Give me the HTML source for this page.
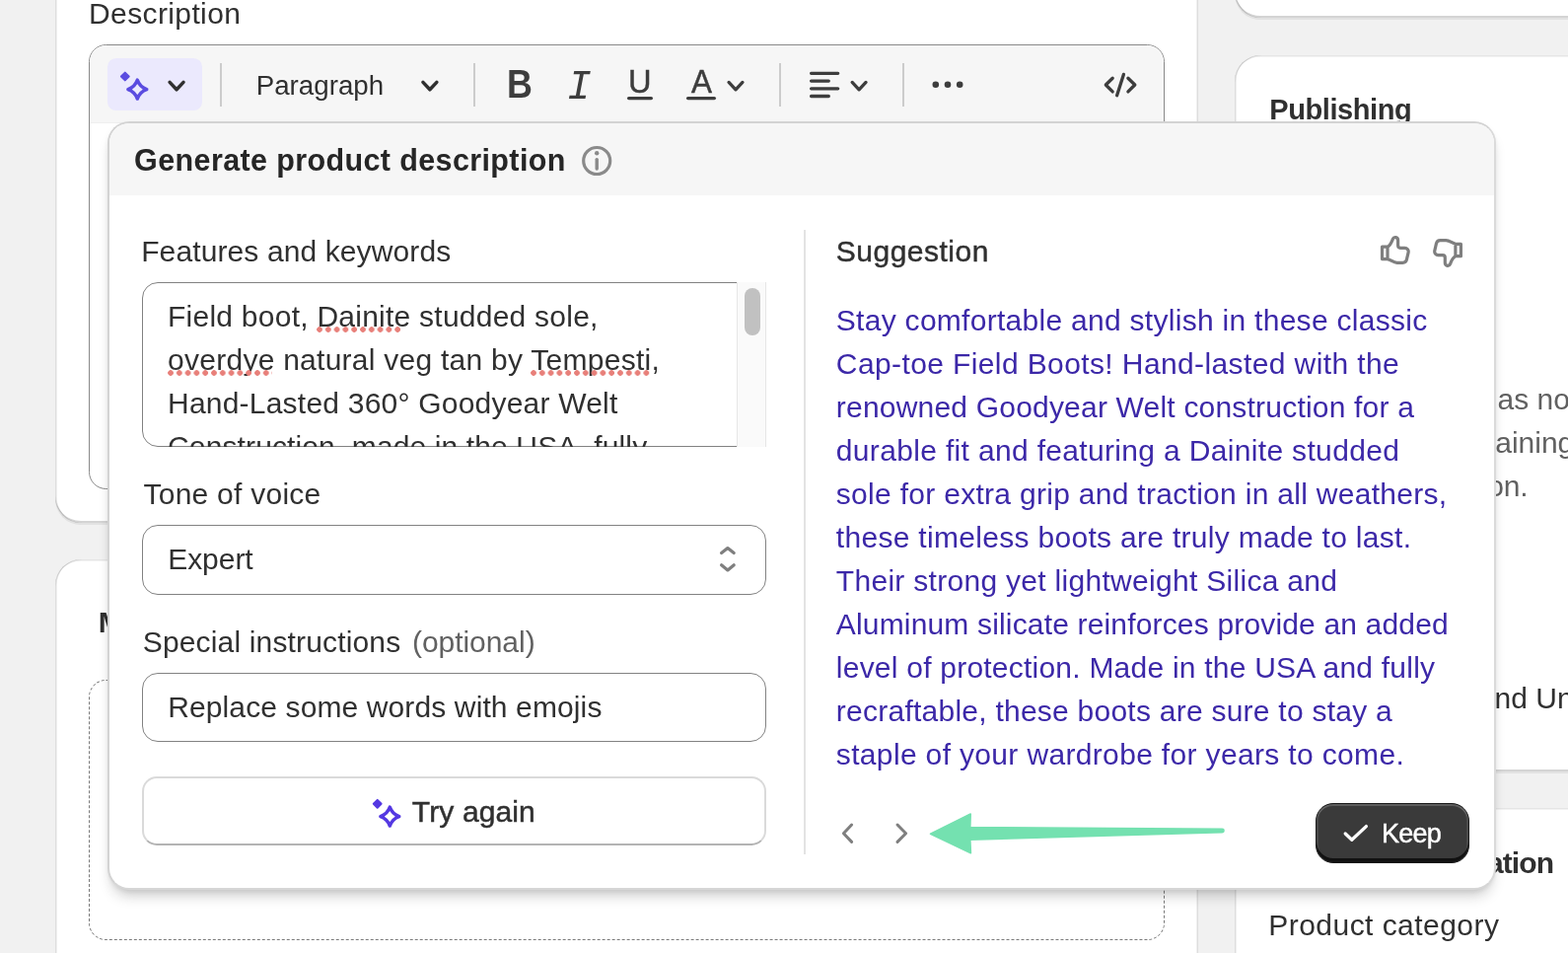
<!DOCTYPE html>
<html lang="en">
<head>
<meta charset="utf-8">
<title>Generate product description</title>
<style>
html,body{margin:0;padding:0}
body{width:1590px;height:966px;overflow:hidden;position:relative;background:#f1f1f1;will-change:transform;
  font-family:"Liberation Sans",sans-serif;font-size:30px;color:#303030}
.t{position:absolute;white-space:pre;line-height:44px}
.g{position:absolute;line-height:60px;transform-origin:0 0;color:#3d3d3d}
.pre{position:absolute;right:100%;top:0;margin-right:2px}
.card{position:absolute;background:#fff;border-radius:26px;
  box-shadow:inset 1.5px 0 0 rgba(0,0,0,.13),inset -1.5px 0 0 rgba(0,0,0,.13),inset 0 -2px 0 rgba(0,0,0,.17),inset 0 1.5px 0 rgba(204,204,204,.5),0 2px 0 rgba(26,26,26,.07)}
.layer{position:absolute;left:0;top:0;width:1590px;height:966px;pointer-events:none}
svg.layer{overflow:visible}
#editor{position:absolute;left:90px;top:45px;width:1089px;height:449px;border:1px solid #8a8a8a;border-radius:17.6px;background:#fff;overflow:hidden}
#toolbar{position:absolute;left:0;top:0;right:0;height:78px;background:#f6f6f6;border-bottom:1px solid #efefef}
#aibtn{position:absolute;left:109px;top:59px;width:96px;height:53px;border-radius:8.8px;background:#ebe9fd}
.vdiv{position:absolute;top:64px;width:2px;height:44px;background:#cccccc}
#dropzone{position:absolute;left:90px;top:689px;width:1089px;height:262px;border:1px dashed #7a7a7a;border-radius:17.6px}
#pop{position:absolute;left:109px;top:123px;width:1404px;height:775px;border:2px solid #d3d3d3;border-right-color:#dadada;border-bottom-color:#d6d6d6;border-radius:22px;background:#fff;
  box-shadow:0 10px 14px -5px rgba(26,26,26,.25),0 2px 5px rgba(26,26,26,.06)}
#popclip{position:absolute;left:0;top:0;right:0;bottom:0;border-radius:20px;overflow:hidden}
#pophead{position:absolute;left:0;top:0;right:0;height:73px;background:#f6f6f6}
#popin{position:absolute;left:-111px;top:-125px;width:1590px;height:966px}
.field{position:absolute;border:1px solid #828282;border-radius:16px;background:#fff;box-sizing:border-box}
#ta{position:absolute;left:144px;top:286px;width:633px;height:167px;overflow:hidden}
#tabox{position:absolute;left:0;top:0;width:640px;height:167px;box-sizing:border-box;border:1px solid #828282;border-radius:16px 0 0 16px}
#tain{position:absolute;left:-144px;top:-286px;width:1590px;height:966px}
#track{position:absolute;left:747px;top:286px;width:30px;height:167px;background:#fafafa;box-sizing:border-box;border-left:1px solid #e6e6e6;border-right:1px solid #e6e6e6}
#thumb{position:absolute;left:755px;top:292px;width:16px;height:48px;border-radius:8px;background:#c1c1c1}
.sp{position:absolute;height:6px;background-image:radial-gradient(circle at 3px 3px,#e8807a 2.5px,rgba(232,128,122,0) 3.1px);background-size:8.8px 6px;background-repeat:repeat-x}
#try{position:absolute;left:144px;top:787.4px;width:633px;height:70px;box-sizing:border-box;border-radius:15px;background:#fff;
  border:2px solid #dadada;border-bottom-color:#b4b4b4}
#keep{position:absolute;left:1334px;top:814px;width:156px;height:61px;box-sizing:border-box;border-radius:18px;background:#3a3a3a;
  border:1.5px solid #1a1a1a;box-shadow:inset 0 -4px 0 #111,inset 0 2px 0 rgba(255,255,255,.18),inset 2px 0 0 rgba(255,255,255,.08),inset -2px 0 0 rgba(255,255,255,.08)}
#coldiv{position:absolute;left:815px;top:233px;width:2px;height:633px;background:#e3e3e3}
</style>
</head>
<body>
<!-- page cards -->
<div class="card" style="left:56px;top:-60px;width:1159px;height:590px"></div>
<div class="card" style="left:56px;top:567px;width:1159px;height:460px"></div>
<div class="card" style="left:1252px;top:-60px;width:400px;height:78px"></div>
<div class="card" style="left:1252px;top:56px;width:400px;height:726px"></div>
<div class="card" style="left:1252px;top:819px;width:400px;height:220px"></div>

<div id="editor"><div id="toolbar"></div></div>
<div id="aibtn"></div>
<div class="vdiv" style="left:223px"></div>
<div class="vdiv" style="left:480px"></div>
<div class="vdiv" style="left:790px"></div>
<div class="vdiv" style="left:915px"></div>
<div id="dropzone"></div>
<div class="g" style="left:513.70px;top:55.60px;transform:scale(0.855,0.988);font-weight:700;font-size:42px">B</div>
<div class="g" style="left:575.20px;top:57.80px;transform:scale(0.981,1.022);font-family:'Liberation Mono',monospace;font-style:italic;font-size:42px">I</div>
<div class="g" style="left:637.24px;top:54.04px;transform:scale(0.933,0.961);font-size:35px;-webkit-text-stroke:0.45px #3d3d3d">U</div>
<div class="g" style="left:700.50px;top:55.04px;transform:scale(0.899,0.940);font-size:35px;-webkit-text-stroke:0.45px #3d3d3d">A</div>
<div class="t" style="left:90.06px;top:-8.40px;letter-spacing:0.380px;">Description</div>
<div class="t" style="left:259.70px;top:65.40px;font-size:27.7px;letter-spacing:0.025px;">Paragraph</div>
<div class="t" style="left:1287.34px;top:88.95px;font-size:29px;font-weight:700;letter-spacing:-0.422px;">Publishing</div>
<div class="t" style="left:1518.60px;top:382.61px;color:#616161;letter-spacing:0.000px;"><span class="pre">This product h</span>as no</div>
<div class="t" style="left:1516.22px;top:426.61px;color:#616161;letter-spacing:0.000px;"><span class="pre">inventory rem</span>aining</div>
<div class="t" style="left:1508.34px;top:470.61px;color:#616161;letter-spacing:-0.200px;"><span class="pre">at this locati</span>on.</div>
<div class="t" style="left:1515.58px;top:685.61px;letter-spacing:0.000px;"><span class="pre">International a</span>nd United States</div>
<div class="t" style="left:1508.10px;top:852.61px;font-weight:700;letter-spacing:-0.950px;"><span class="pre">Product organiz</span>ation</div>
<div class="t" style="left:1286.32px;top:915.61px;letter-spacing:0.453px;">Product category</div>
<div class="t" style="left:99.84px;top:608.61px;font-weight:700;letter-spacing:0.000px;">Media</div>
<svg class="layer" viewBox="0 0 1590 966" fill="none" stroke-linecap="round" stroke-linejoin="round">
<path d="M139.30 81.10C141.00 85.90 144.00 88.90 148.80 90.60C144.00 92.30 141.00 95.30 139.30 100.10C137.60 95.30 134.60 92.30 129.80 90.60C134.60 88.90 137.60 85.90 139.30 81.10Z" stroke="#5b4ce0" stroke-width="3.4"/><path d="M126.80 73.60L130.70 77.50L126.80 81.40L122.90 77.50Z" fill="#5b4ce0" stroke="#5b4ce0" stroke-width="2"/>
<path d="M172.10 83.4L179.05 90.8L186.00 83.4" stroke="#303030" stroke-width="3.5"/>
<path d="M428.95 83.4L435.90 90.8L442.85 83.4" stroke="#303030" stroke-width="3.5"/>
<path d="M637.6 99.6H660.4" stroke="#3d3d3d" stroke-width="3.3"/>
<path d="M697.6 99.6H724.4" stroke="#3d3d3d" stroke-width="3.3"/>
<path d="M739.05 83.4L746.00 90.8L752.95 83.4" stroke="#3d3d3d" stroke-width="3.3"/>
<path d="M822.6 74.3H849.7M822.6 82.1H840.3M822.6 89.8H849.7M822.6 97.5H840.3" stroke="#3d3d3d" stroke-width="3.3"/>
<path d="M864.15 83.4L871.10 90.8L878.05 83.4" stroke="#3d3d3d" stroke-width="3.3"/>
<circle cx="948.8" cy="85.8" r="3.3" fill="#3d3d3d"/>
<circle cx="961.0" cy="85.8" r="3.3" fill="#3d3d3d"/>
<circle cx="973.2" cy="85.8" r="3.3" fill="#3d3d3d"/>
<path d="M1128.2 79.2L1121.3 86L1128.2 92.9M1139.4 75.4L1132.6 96.8M1143.9 79.2L1150.8 86L1143.9 92.9" stroke="#3d3d3d" stroke-width="3.3"/>
</svg>

<!-- popover -->
<div id="pop"><div id="popclip"><div id="pophead"></div><div id="popin">
  <div id="coldiv"></div>
  <div id="ta"><div id="tabox"></div><div id="tain">
<div class="t" style="left:170.06px;top:298.61px;letter-spacing:0.244px;">Field boot, Dainite studded sole,</div>
<div class="t" style="left:170.06px;top:342.61px;letter-spacing:0.257px;">overdye natural veg tan by Tempesti,</div>
<div class="t" style="left:170.06px;top:386.61px;letter-spacing:0.214px;">Hand-Lasted 360° Goodyear Welt</div>
<div class="t" style="left:170.06px;top:430.61px;letter-spacing:0.120px;">Construction, made in the USA, fully</div>
    <div class="sp" style="left:321px;top:331.2px;width:88px"></div>
    <div class="sp" style="left:170px;top:375.2px;width:106px"></div>
    <div class="sp" style="left:538px;top:375.2px;width:123px"></div>
  </div></div>
  <div id="track"></div><div id="thumb"></div>
  <div class="field" style="left:144px;top:532px;width:633px;height:71px"></div>
  <div class="field" style="left:144px;top:682px;width:633px;height:70px"></div>
  <div id="try"></div>
  <div id="keep"></div>
<div class="t" style="left:136.10px;top:140.43px;font-size:30.5px;font-weight:700;color:#262626;letter-spacing:0.378px;">Generate product description</div>
<div class="t" style="left:143.18px;top:232.60px;letter-spacing:0.110px;">Features and keywords</div>
<div class="t" style="left:145.48px;top:478.61px;letter-spacing:0.250px;">Tone of voice</div>
<div class="t" style="left:170.18px;top:544.61px;letter-spacing:-0.040px;">Expert</div>
<div class="t" style="left:144.72px;top:628.61px;letter-spacing:0.158px;">Special instructions</div>
<div class="t" style="left:417.96px;top:628.61px;color:#616161;letter-spacing:-0.044px;">(optional)</div>
<div class="t" style="left:170.18px;top:694.61px;letter-spacing:0.117px;">Replace some words with emojis</div>
<div class="t" style="left:417.86px;top:800.61px;letter-spacing:0.125px;-webkit-text-stroke:0.5px #303030;">Try again</div>
<div class="t" style="left:847.84px;top:232.60px;letter-spacing:0.489px;-webkit-text-stroke:0.45px #303030;">Suggestion</div>
<div class="t" style="left:1400.96px;top:822.64px;font-size:27px;color:#fff;letter-spacing:-0.733px;-webkit-text-stroke:0.45px #fff;">Keep</div>
<div class="t" style="left:847.84px;top:302.61px;color:#3c28a8;letter-spacing:0.282px;">Stay comfortable and stylish in these classic</div>
<div class="t" style="left:847.84px;top:346.61px;color:#3c28a8;letter-spacing:0.390px;">Cap-toe Field Boots! Hand-lasted with the</div>
<div class="t" style="left:847.84px;top:390.61px;color:#3c28a8;letter-spacing:0.200px;">renowned Goodyear Welt construction for a</div>
<div class="t" style="left:847.84px;top:434.61px;color:#3c28a8;letter-spacing:0.333px;">durable fit and featuring a Dainite studded</div>
<div class="t" style="left:847.84px;top:478.61px;color:#3c28a8;letter-spacing:0.292px;">sole for extra grip and traction in all weathers,</div>
<div class="t" style="left:847.84px;top:522.61px;color:#3c28a8;letter-spacing:0.302px;">these timeless boots are truly made to last.</div>
<div class="t" style="left:847.84px;top:566.61px;color:#3c28a8;letter-spacing:0.295px;">Their strong yet lightweight Silica and</div>
<div class="t" style="left:847.84px;top:610.61px;color:#3c28a8;letter-spacing:0.164px;">Aluminum silicate reinforces provide an added</div>
<div class="t" style="left:847.84px;top:654.61px;color:#3c28a8;letter-spacing:0.227px;">level of protection. Made in the USA and fully</div>
<div class="t" style="left:847.84px;top:698.61px;color:#3c28a8;letter-spacing:0.243px;">recraftable, these boots are sure to stay a</div>
<div class="t" style="left:847.84px;top:742.61px;color:#3c28a8;letter-spacing:0.341px;">staple of your wardrobe for years to come.</div>
  <svg class="layer" viewBox="0 0 1590 966" fill="none" stroke-linecap="round" stroke-linejoin="round">
<circle cx="605.2" cy="163" r="13.5" stroke="#8a8a8a" stroke-width="3.2"/><circle cx="605.2" cy="155.2" r="2.2" fill="#8a8a8a"/><path d="M605.2 161.6V171" stroke="#8a8a8a" stroke-width="3.4"/>
<path d="M731.6 560.6L737.9 555.6L744.2 560.6M731.6 572.8L737.9 577.9L744.2 572.8" stroke="#7f7f7f" stroke-width="3.2"/>
<path d="M395.30 818.10C397.00 822.90 400.00 825.90 404.80 827.60C400.00 829.30 397.00 832.30 395.30 837.10C393.60 832.30 390.60 829.30 385.80 827.60C390.60 825.90 393.60 822.90 395.30 818.10Z" stroke="#5438e2" stroke-width="3.4"/><path d="M382.70 810.90L386.60 814.80L382.70 818.70L378.80 814.80Z" fill="#5438e2" stroke="#5438e2" stroke-width="2"/>
<path d="M1401.5 250.2H1407V262.6H1401.5ZM1407 250.2C1410 248.6 1411.3 245 1412.4 242.2C1413.4 239.6 1417.6 240 1417.6 243.6V248.8C1417.6 250.4 1418.6 251.3 1420 251.3H1424.4C1427 251.3 1428.6 253.4 1428.1 255.8L1426.4 263.2C1425.9 265.2 1424.4 266.3 1422.4 266.3H1416.6C1413 266.3 1410.6 263.4 1407 262.6" stroke="#7f7f7f" stroke-width="3.2"/>
<g transform="translate(2882.9 509.9) rotate(180)"><path d="M1401.5 250.2H1407V262.6H1401.5ZM1407 250.2C1410 248.6 1411.3 245 1412.4 242.2C1413.4 239.6 1417.6 240 1417.6 243.6V248.8C1417.6 250.4 1418.6 251.3 1420 251.3H1424.4C1427 251.3 1428.6 253.4 1428.1 255.8L1426.4 263.2C1425.9 265.2 1424.4 266.3 1422.4 266.3H1416.6C1413 266.3 1410.6 263.4 1407 262.6" stroke="#7f7f7f" stroke-width="3.2"/></g>
<path d="M863.6 836L855.4 844.7L863.6 853.4M910 836L918.6 844.7L910 853.4" stroke="#7f7f7f" stroke-width="3.0"/>
<path d="M943.5 845.2L984.2 825L983.8 838.5L1239.4 840.3A1.65 1.65 0 0 1 1239.4 843.6L983.8 851.1L984.4 864.7Z" fill="#74e1b0" stroke="#74e1b0" stroke-width="1.6"/>
<path d="M1364.2 845L1370.8 851.2L1385.4 837.6" stroke="#fff" stroke-width="3.3"/>
  </svg>
</div></div></div>
</body>
</html>
